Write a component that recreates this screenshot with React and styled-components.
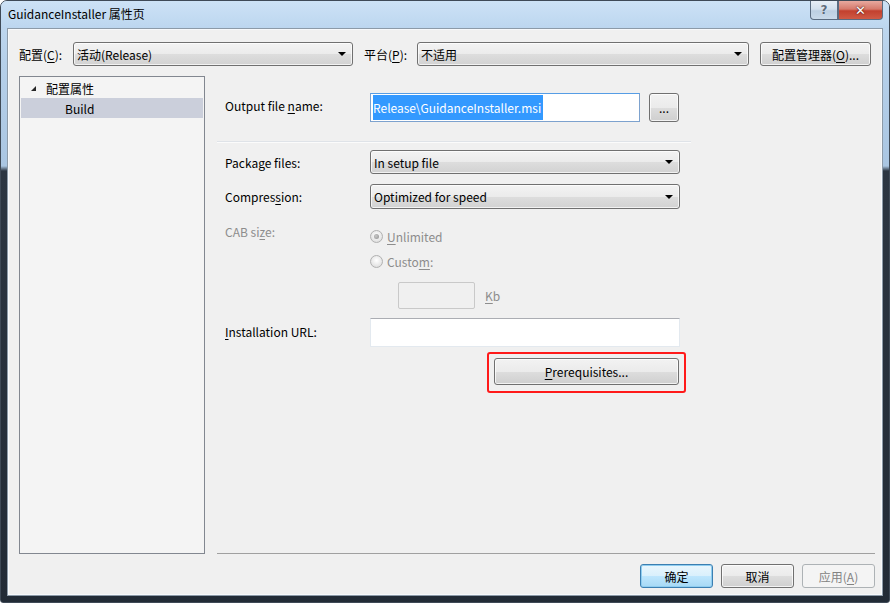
import React from 'react'
import styled, { createGlobalStyle } from 'styled-components'

const Global = createGlobalStyle`
  html, body { margin: 0; padding: 0; background: #fff; }
  body { font-family: "Noto Sans CJK SC", "Noto Sans", sans-serif; font-size: 12px; color: #000; }
`

const Frame = styled.div`
  width: 890px;
  height: 603px;
  box-sizing: border-box;
  display: flex;
  flex-direction: column;
  border-radius: 7px 7px 3px 3px;
  border: 1px solid #3f4a57;
  background: linear-gradient(to bottom, #c3dbf2 0px, #b6d0ea 60px, #aac6e2 165px, #2c3642 170px, #222b36 100%);
  overflow: hidden;
`

const TitleBar = styled.div`
  height: 27px;
  display: flex;
  align-items: flex-start;
  justify-content: space-between;
  padding-left: 7px;
  background: linear-gradient(to bottom, #cde2f6 0%, #bcd6ef 100%);
`

const Title = styled.div`
  padding-top: 4px;
  font-size: 12px;
  color: #000;
`

const Caption = styled.div`
  display: flex;
  margin-right: 6px;
`

const CapButton = styled.div`
  height: 19px;
  width: ${p => p.w}px;
  box-sizing: border-box;
  display: flex;
  align-items: center;
  justify-content: center;
  border: 1px solid #5a6b80;
  border-top: none;
  border-radius: ${p => p.close ? '0 0 4px 0' : '0 0 0 4px'};
  background: ${p => p.close
    ? 'linear-gradient(to bottom, #e8a99f 0%, #d67a6c 45%, #c2402e 55%, #cf5a45 100%)'
    : 'linear-gradient(to bottom, #e7eef6 0%, #d3e0ed 45%, #bccfe2 55%, #c9daea 100%)'};
  color: ${p => p.close ? '#fff' : '#5d6b7a'};
  font-family: "DejaVu Sans", sans-serif;
  font-weight: bold;
  font-size: ${p => p.close ? 13 : 12}px;
  text-shadow: ${p => p.close ? '0 0 2px #5a1a10, 0 0 1px #5a1a10' : '0 0 1px #fff'};
`

const Panel = styled.div`
  flex: 1;
  margin: 0 6px 6px 6px;
  border: 1px solid #8c9aa8;
  background: #f0f0f0;
  display: flex;
  flex-direction: column;
  box-shadow: inset 0 0 0 1px #f7f9fb;
`

const TopRow = styled.div`
  display: flex;
  align-items: center;
  padding: 13px 0 0 11px;
  height: 24px;
`

const Label = styled.span`
  display: inline-block;
  width: ${p => p.w ? p.w + 'px' : 'auto'};
  margin-left: ${p => p.ml || 0}px;
  margin-bottom: ${p => p.lift ? p.lift * 2 : 0}px;
  color: ${p => p.disabled ? '#8d8d8d' : '#000'};
  white-space: nowrap;
`

const U = styled.span`
  text-decoration: underline;
  text-underline-offset: 2px;
`

const Combo = styled.div`
  width: ${p => p.w}px;
  height: ${p => p.h || 24}px;
  margin-left: ${p => p.ml || 0}px;
  box-sizing: border-box;
  border: 1px solid #707070;
  border-radius: 3px;
  background: linear-gradient(to bottom, #f3f3f3 0%, #ebebeb 50%, #dddddd 51%, #d2d2d2 100%);
  box-shadow: inset 0 0 0 1px rgba(255,255,255,0.7);
  display: flex;
  align-items: center;
  justify-content: space-between;
  padding: 0 6px 0 3px;
  color: #000;
`

const Arrow = styled.span`
  width: 0;
  height: 0;
  border-left: 4px solid transparent;
  border-right: 4px solid transparent;
  border-top: 4px solid #000;
`

const Button = styled.div`
  width: ${p => p.w}px;
  height: ${p => p.h || 24}px;
  margin-left: ${p => p.ml || 0}px;
  box-sizing: border-box;
  border: 1px solid ${p => p.primary ? '#3c7fb1' : p.disabled ? '#adb2b5' : '#707070'};
  border-radius: 3px;
  background: ${p => p.disabled
    ? '#f4f4f4'
    : p.primary
      ? 'linear-gradient(to bottom, #eaf6fd 0%, #d9f0fc 50%, #bee6fd 51%, #a7d9f5 100%)'
      : 'linear-gradient(to bottom, #f2f2f2 0%, #ebebeb 50%, #dddddd 51%, #cfcfcf 100%)'};
  box-shadow: inset 0 0 0 1px ${p => p.disabled ? 'transparent' : p.primary ? '#8fcdf0' : 'rgba(255,255,255,0.75)'};
  display: flex;
  align-items: center;
  justify-content: center;
  color: ${p => p.disabled ? '#838383' : '#000'};
  white-space: nowrap;
`

const Body = styled.div`
  flex: 1;
  display: flex;
  margin-top: 10px;
  padding: 0 7px 0 11px;
`

const Tree = styled.div`
  width: 186px;
  box-sizing: border-box;
  border: 1px solid #828790;
  background: #f4f4f4;
  padding: 1px 1px;
`

const TreeItem = styled.div`
  height: 20px;
  display: flex;
  align-items: center;
  padding-left: ${p => p.indent}px;
  background: ${p => p.selected ? '#cbcfdb' : 'transparent'};
`

const Expander = styled.span`
  width: 0;
  height: 0;
  border-left: 5px solid transparent;
  border-bottom: 5px solid #262626;
  margin-right: 10px;
  margin-top: 1px;
`

const Pane = styled.div`
  flex: 1;
  margin-left: 12px;
  border-bottom: 1px solid #a0a0a0;
  padding-left: 8px;
  display: flex;
  flex-direction: column;
`

const Row = styled.div`
  display: flex;
  align-items: center;
  margin-top: ${p => p.mt || 0}px;
  height: ${p => p.h || 24}px;
`

const FieldLabel = styled(Label)`
  width: 145px;
`

const TextBox = styled.div`
  width: ${p => p.w}px;
  height: ${p => p.h}px;
  margin-left: ${p => p.ml || 0}px;
  box-sizing: border-box;
  border: 1px solid ${p => p.focus ? '#7da2ce' : '#e3e9ef'};
  border-top-color: ${p => p.focus ? '#569de5' : '#abadb3'};
  background: ${p => p.disabled ? '#f0f0f0' : '#fff'};
  display: flex;
  align-items: center;
  padding-left: 2px;
  ${p => p.disabled && 'border-color: #c9c9c9; border-radius: 2px;'}
`

const Selected = styled.span`
  background: #3399ff;
  color: #fff;
  line-height: 25px;
  padding-right: 2px;
`

const Separator = styled.div`
  width: 474px;
  margin-left: -8px;
  margin-top: ${p => p.mt}px;
  border-top: 1px solid #dfe3e8;
  border-bottom: 1px solid #fbfbfb;
`

const Radio = styled.span`
  width: 11px;
  height: 11px;
  border-radius: 50%;
  border: 1px solid #b1b1b1;
  background: radial-gradient(circle at 50% 40%, #ffffff 0%, #e9e9e9 55%, #d6d6d6 100%);
  margin-right: 4px;
  display: flex;
  align-items: center;
  justify-content: center;
  &::after {
    content: '';
    display: ${p => p.checked ? 'block' : 'none'};
    width: 5px;
    height: 5px;
    border-radius: 50%;
    background: radial-gradient(circle at 40% 40%, #c8c8c8, #8f8f8f);
  }
`

const Choice = styled.div`
  display: flex;
  align-items: center;
  color: #8d8d8d;
`

const Highlight = styled.div`
  margin-left: 262px;
  margin-top: 5px;
  width: 199px;
  height: 41px;
  box-sizing: border-box;
  border: 2px solid #ff1a1a;
  border-radius: 3px;
  padding: 4px 5px 6px 5px;
`

const Spacer = styled.div`
  flex: 1;
`

const Footer = styled.div`
  display: flex;
  justify-content: flex-end;
  padding: 10px 7px 7px 0;
`

export default function App() {
  return (
    <>
      <Global />
      <Frame>
        <TitleBar>
          <Title>GuidanceInstaller 属性页</Title>
          <Caption>
            <CapButton w={28}>?</CapButton>
            <CapButton w={45} close>✕</CapButton>
          </Caption>
        </TitleBar>
        <Panel>
          <TopRow>
            <Label w={54}>配置(<U>C</U>):</Label>
            <Combo w={280}>活动(Release)<Arrow /></Combo>
            <Label w={53} ml={11}>平台(<U>P</U>):</Label>
            <Combo w={332}>不适用<Arrow /></Combo>
            <Button w={111} ml={11}>配置管理器(<U>O</U>)...</Button>
          </TopRow>
          <Body>
            <Tree>
              <TreeItem indent={10}><Expander />配置属性</TreeItem>
              <TreeItem indent={44} selected>Build</TreeItem>
            </Tree>
            <Pane>
              <Row mt={17} h={29}>
                <FieldLabel lift={2}>Output file <U>n</U>ame:</FieldLabel>
                <TextBox w={270} h={29} focus><Selected>Release\GuidanceInstaller.msi</Selected></TextBox>
                <Button w={30} h={29} ml={9}>...</Button>
              </Row>
              <Separator mt={19} />
              <Row mt={7}>
                <FieldLabel>Packa<U>g</U>e files:</FieldLabel>
                <Combo w={310}>In setup file<Arrow /></Combo>
              </Row>
              <Row mt={10} h={25}>
                <FieldLabel>Compres<U>s</U>ion:</FieldLabel>
                <Combo w={310} h={25}>Optimized for speed<Arrow /></Combo>
              </Row>
              <Row mt={17} h={20}>
                <FieldLabel disabled lift={5}>CAB si<U>z</U>e:</FieldLabel>
                <Choice><Radio checked /><U>U</U>nlimited</Choice>
              </Row>
              <Row mt={5} h={20}>
                <FieldLabel />
                <Choice><Radio />Custo<U>m</U>:</Choice>
              </Row>
              <Row mt={11} h={27}>
                <FieldLabel />
                <TextBox w={77} h={27} ml={28} disabled />
                <Label ml={10} disabled><U>K</U>b</Label>
              </Row>
              <Row mt={9} h={29}>
                <FieldLabel lift={1}><U>I</U>nstallation URL:</FieldLabel>
                <TextBox w={310} h={29} />
              </Row>
              <Highlight>
                <Button w={185} h={27}><U>P</U>rerequisites...</Button>
              </Highlight>
              <Spacer />
            </Pane>
          </Body>
          <Footer>
            <Button w={73} primary>确定</Button>
            <Button w={73} ml={8}>取消</Button>
            <Button w={73} ml={8} disabled>应用(<U>A</U>)</Button>
          </Footer>
        </Panel>
      </Frame>
    </>
  )
}
